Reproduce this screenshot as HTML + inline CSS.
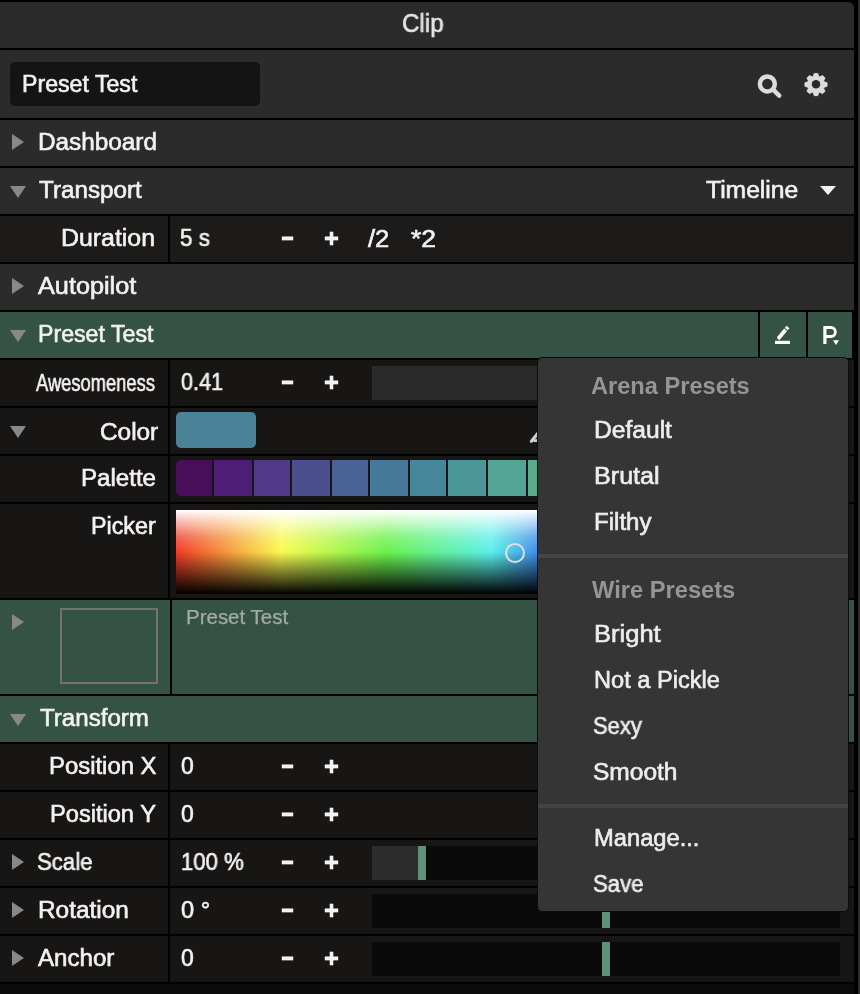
<!DOCTYPE html>
<html><head><meta charset="utf-8">
<style>
html,body{margin:0;padding:0;}
body{width:860px;height:994px;background:#000;position:relative;overflow:hidden;font-family:"Liberation Sans",sans-serif;color:#f2f2f2;}
.a{position:absolute;}
.t{position:absolute;font-size:24px;line-height:28px;white-space:nowrap;transform-origin:0 0;will-change:transform;}
.row{position:absolute;left:0;width:854px;height:46px;background:#2b2b2b;}
.dk{background:#1c1b1a;}
.dk2{background:#171615;}
.gr{background:#355345;}
.dv{position:absolute;top:0;width:2px;height:100%;background:#000;}
.tri-r{position:absolute;width:0;height:0;border-top:8px solid transparent;border-bottom:8px solid transparent;border-left:12px solid #888;}
.tri-d{position:absolute;width:0;height:0;border-left:8px solid transparent;border-right:8px solid transparent;border-top:12px solid #888;}
.sl{position:absolute;left:372px;width:468px;height:34px;top:6px;background:#0a0a0a;}
.hd{position:absolute;top:0;width:8px;height:34px;background:#5f9079;}
.menu{position:absolute;left:537px;top:357px;width:310px;height:553px;background:#353535;border:1px solid #0c0c0c;border-radius:5px;}
.sep{position:absolute;left:0;width:310px;height:4px;background:#444444;}
</style></head><body>
<div class="a" style="left:858px;top:0;width:2px;height:994px;background:#2c2c2c"></div>
<div class="a" style="left:0;top:984px;width:854px;height:10px;background:#0b0b0b"></div>

<div class="a" style="left:0;top:2px;width:854px;height:46px;background:#2b2b2b;border-top-right-radius:6px"></div>
<div class="a" style="left:0;top:50px;width:854px;height:68px;background:#2b2b2b"></div>
<div class="a" style="left:10px;top:62px;width:250px;height:44px;background:#141414;border-radius:5px"></div>
<svg class="a" style="left:750px;top:65px" width="40" height="40">
  <circle cx="17.35" cy="18.95" r="7.47" fill="none" stroke="#dcdcdc" stroke-width="4.45"/>
  <line x1="23.6" y1="25.2" x2="29.2" y2="30.7" stroke="#dcdcdc" stroke-width="4.5" stroke-linecap="round"/>
</svg>
<svg class="a" style="left:800px;top:68px" width="32" height="32">
  <path fill="#dcdcdc" stroke="#dcdcdc" stroke-width="0.8" stroke-linejoin="round" d="M13.30 8.35 L14.20 5.45 L17.80 5.45 L18.70 8.35 A8.20 8.20 0 0 1 19.89 8.84 L22.58 7.43 L25.12 9.97 L23.71 12.66 A8.20 8.20 0 0 1 24.20 13.85 L27.10 14.75 L27.10 18.35 L24.20 19.25 A8.20 8.20 0 0 1 23.71 20.44 L25.12 23.13 L22.58 25.67 L19.89 24.26 A8.20 8.20 0 0 1 18.70 24.75 L17.80 27.65 L14.20 27.65 L13.30 24.75 A8.20 8.20 0 0 1 12.11 24.26 L9.42 25.67 L6.88 23.13 L8.29 20.44 A8.20 8.20 0 0 1 7.80 19.25 L4.90 18.35 L4.90 14.75 L7.80 13.85 A8.20 8.20 0 0 1 8.29 12.66 L6.88 9.97 L9.42 7.43 L12.11 8.84 A8.20 8.20 0 0 1 13.30 8.35 Z"/>
  <circle cx="16" cy="16.3" r="4.25" fill="#2b2b2b"/>
</svg>

<div class="row" style="top:120px"></div>
<div class="tri-r" style="left:12px;top:134px"></div>

<div class="row" style="top:168px"></div>
<div class="tri-d" style="left:10px;top:186px"></div>
<div class="a" style="left:820px;top:186px;width:0;height:0;border-left:8px solid transparent;border-right:8px solid transparent;border-top:9px solid #f2f2f2"></div>

<div class="row dk" style="top:216px"><div class="dv" style="left:168px"></div></div>

<div class="row" style="top:264px"></div>
<div class="tri-r" style="left:12px;top:278px"></div>

<div class="row gr" style="top:312px;width:852px"><div class="dv" style="left:758px"></div><div class="dv" style="left:806px"></div></div>
<div class="tri-d" style="left:10px;top:330px"></div>
<svg class="a" style="left:760px;top:312px" width="92" height="46">
  <g fill="#fff" stroke="none">
    <rect x="15" y="28.8" width="14.9" height="3.2"/>
    <polygon points="17.39,24.52 17.18,26.31 19.30,28.14 27.11,19.02 24.22,16.55"/>
    <polygon points="24.80,15.86 27.69,18.33 29.45,16.28 26.56,13.81"/>
  </g>
  <g fill="#fff">
    <rect x="63.3" y="14.1" width="3.2" height="17.9"/>
  </g>
  <path d="M65 15.5 H70.9 A4.5 4.5 0 0 1 70.9 24.5 H65" fill="none" stroke="#fff" stroke-width="2.8"/>
  <polygon points="73,28.3 79,28.3 76,33" fill="#fff"/>
</svg>

<div class="row dk2" style="top:360px"><div class="dv" style="left:168px"></div><div class="sl" style="background:#2b2b2b"></div></div>

<div class="row dk2" style="top:408px"><div class="dv" style="left:168px"></div></div>
<div class="tri-d" style="left:10px;top:426px"></div>
<div class="a" style="left:176px;top:412px;width:80px;height:36px;background:#4a8398;border-radius:5px"></div>
<svg class="a" style="left:520px;top:425px" width="30" height="25"><path d="M11.4 16.3 L18.5 7.5" stroke="#cfcfcf" stroke-width="3.2" stroke-linecap="round"/><rect x="13.5" y="14.2" width="5" height="2.8" fill="#cfcfcf"/></svg>

<div class="row dk2" style="top:456px"><div class="dv" style="left:168px"></div></div>
<div class="a" style="left:176px;top:460px;width:664px;height:36px;border-radius:5px;overflow:hidden"><div class="a" style="left:0px;top:0;width:36px;height:36px;background:#480e5a"></div><div class="a" style="left:38px;top:0;width:38px;height:36px;background:#4e1e76"></div><div class="a" style="left:78px;top:0;width:36px;height:36px;background:#503a88"></div><div class="a" style="left:116px;top:0;width:38px;height:36px;background:#4c4f8e"></div><div class="a" style="left:156px;top:0;width:36px;height:36px;background:#4a6296"></div><div class="a" style="left:194px;top:0;width:38px;height:36px;background:#46789a"></div><div class="a" style="left:234px;top:0;width:36px;height:36px;background:#45869a"></div><div class="a" style="left:272px;top:0;width:38px;height:36px;background:#4a9698"></div><div class="a" style="left:312px;top:0;width:38px;height:36px;background:#52a494"></div><div class="a" style="left:352px;top:0;width:37px;height:36px;background:#58ac8c"></div><div class="a" style="left:391px;top:0;width:37px;height:36px;background:#66b686"></div><div class="a" style="left:430px;top:0;width:37px;height:36px;background:#7ec07c"></div><div class="a" style="left:469px;top:0;width:37px;height:36px;background:#98c870"></div><div class="a" style="left:508px;top:0;width:37px;height:36px;background:#b0d064"></div><div class="a" style="left:547px;top:0;width:37px;height:36px;background:#c8d858"></div><div class="a" style="left:586px;top:0;width:37px;height:36px;background:#dfe04c"></div><div class="a" style="left:625px;top:0;width:39px;height:36px;background:#f0e640"></div>
</div>

<div class="a dk2" style="left:0;top:504px;width:854px;height:94px"><div class="dv" style="left:168px"></div></div>
<div class="a" style="left:176px;top:510px;width:664px;height:84px;background:linear-gradient(to right,#f03a28 0px,#fafa50 105px,#6af24a 210px,#5af0ea 315px,#2f5ae6 385px,#e64bf0 510px,#f03a28 630px)"></div>
<div class="a" style="left:176px;top:510px;width:664px;height:84px;background:linear-gradient(to bottom,#fff 0%,rgba(255,255,255,.6) 16%,rgba(255,255,255,.22) 32%,rgba(255,255,255,0) 50%,rgba(0,0,0,0) 50%,#000 100%)"></div>
<div class="a" style="left:505px;top:543px;width:16px;height:16px;border:2px solid #e0e0e0;border-radius:50%"></div>

<div class="a gr" style="left:0;top:600px;width:854px;height:94px"><div class="dv" style="left:170px"></div></div>
<div class="tri-r" style="left:12px;top:614px"></div>
<div class="a" style="left:60px;top:608px;width:94px;height:72px;border:2px solid #727272"></div>

<div class="row gr" style="top:696px"></div>
<div class="tri-d" style="left:10px;top:714px"></div>

<div class="row dk2" style="top:744px"><div class="dv" style="left:168px"></div></div>
<div class="row dk2" style="top:792px"><div class="dv" style="left:168px"></div></div>
<div class="row dk2" style="top:840px"><div class="dv" style="left:168px"></div>
  <div class="sl"><div class="a" style="left:0;top:0;width:46px;height:34px;background:#2c2c2c"></div><div class="hd" style="left:46px"></div></div></div>
<div class="tri-r" style="left:12px;top:854px"></div>
<div class="row dk2" style="top:888px"><div class="dv" style="left:168px"></div>
  <div class="sl"><div class="hd" style="left:230px"></div></div></div>
<div class="tri-r" style="left:12px;top:902px"></div>
<div class="row dk2" style="top:936px"><div class="dv" style="left:168px"></div>
  <div class="sl"><div class="hd" style="left:230px"></div></div></div>
<div class="tri-r" style="left:12px;top:950px"></div>

<svg class="a" style="left:280px;top:230px" width="60" height="18"><g fill="#f2f2f2"><rect x="1.8" y="6.46" width="11.4" height="3.9"/><rect x="44.8" y="6.46" width="13.4" height="3.9"/><rect x="49.7" y="1.7" width="3.6" height="13.6"/></g></svg>
<svg class="a" style="left:280px;top:374px" width="60" height="18"><g fill="#f2f2f2"><rect x="1.8" y="6.46" width="11.4" height="3.9"/><rect x="44.8" y="6.46" width="13.4" height="3.9"/><rect x="49.7" y="1.7" width="3.6" height="13.6"/></g></svg>
<svg class="a" style="left:280px;top:758px" width="60" height="18"><g fill="#f2f2f2"><rect x="1.8" y="6.46" width="11.4" height="3.9"/><rect x="44.8" y="6.46" width="13.4" height="3.9"/><rect x="49.7" y="1.7" width="3.6" height="13.6"/></g></svg>
<svg class="a" style="left:280px;top:806px" width="60" height="18"><g fill="#f2f2f2"><rect x="1.8" y="6.46" width="11.4" height="3.9"/><rect x="44.8" y="6.46" width="13.4" height="3.9"/><rect x="49.7" y="1.7" width="3.6" height="13.6"/></g></svg>
<svg class="a" style="left:280px;top:854px" width="60" height="18"><g fill="#f2f2f2"><rect x="1.8" y="6.46" width="11.4" height="3.9"/><rect x="44.8" y="6.46" width="13.4" height="3.9"/><rect x="49.7" y="1.7" width="3.6" height="13.6"/></g></svg>
<svg class="a" style="left:280px;top:902px" width="60" height="18"><g fill="#f2f2f2"><rect x="1.8" y="6.46" width="11.4" height="3.9"/><rect x="44.8" y="6.46" width="13.4" height="3.9"/><rect x="49.7" y="1.7" width="3.6" height="13.6"/></g></svg>
<svg class="a" style="left:280px;top:950px" width="60" height="18"><g fill="#f2f2f2"><rect x="1.8" y="6.46" width="11.4" height="3.9"/><rect x="44.8" y="6.46" width="13.4" height="3.9"/><rect x="49.7" y="1.7" width="3.6" height="13.6"/></g></svg>


<div class="menu">
  <div class="sep" style="top:196px"></div>
  <div class="sep" style="top:446px"></div>
</div>
<div class="t" style="left:401.53px;top:9px;font-size:25px;color:#e4e4e4;font-weight:normal;transform:scaleX(0.9667);-webkit-text-stroke:0.6px #e4e4e4;">Clip</div>
<div class="t" style="left:22.49px;top:70px;font-size:23px;color:#f2f2f2;font-weight:normal;transform:scaleX(1.0061);-webkit-text-stroke:0.6px #f2f2f2;">Preset Test</div>
<div class="t" style="left:38.34px;top:128px;font-size:23px;color:#f2f2f2;font-weight:normal;transform:scaleX(1.0573);-webkit-text-stroke:0.6px #f2f2f2;">Dashboard</div>
<div class="t" style="left:38.60px;top:176px;font-size:23px;color:#f2f2f2;font-weight:normal;transform:scaleX(1.0541);-webkit-text-stroke:0.6px #f2f2f2;">Transport</div>
<div class="t" style="left:706.00px;top:176px;font-size:23px;color:#f2f2f2;font-weight:normal;transform:scaleX(1.0718);-webkit-text-stroke:0.6px #f2f2f2;">Timeline</div>
<div class="t" style="left:61.32px;top:224px;font-size:23px;color:#f2f2f2;font-weight:normal;transform:scaleX(1.0812);-webkit-text-stroke:0.6px #f2f2f2;">Duration</div>
<div class="t" style="left:179.92px;top:224px;font-size:23px;color:#f2f2f2;font-weight:normal;transform:scaleX(0.9759);-webkit-text-stroke:0.6px #f2f2f2;">5 s</div>
<div class="t" style="left:367.90px;top:225px;font-size:23px;color:#f2f2f2;font-weight:normal;transform:scaleX(1.1105);-webkit-text-stroke:0.6px #f2f2f2;">/2</div>
<div class="t" style="left:410.70px;top:225px;font-size:23px;color:#f2f2f2;font-weight:normal;transform:scaleX(1.1524);-webkit-text-stroke:0.6px #f2f2f2;">*2</div>
<div class="t" style="left:38.00px;top:272px;font-size:23px;color:#f2f2f2;font-weight:normal;transform:scaleX(1.0978);-webkit-text-stroke:0.6px #f2f2f2;">Autopilot</div>
<div class="t" style="left:38.49px;top:320px;font-size:23px;color:#f2f2f2;font-weight:normal;transform:scaleX(1.0070);-webkit-text-stroke:0.6px #f2f2f2;">Preset Test</div>
<div class="t" style="left:36.20px;top:369px;font-size:23px;color:#f2f2f2;font-weight:normal;transform:scaleX(0.7973);-webkit-text-stroke:0.6px #f2f2f2;">Awesomeness</div>
<div class="t" style="left:180.50px;top:368px;font-size:23px;color:#f2f2f2;font-weight:normal;transform:scaleX(0.9409);-webkit-text-stroke:0.6px #f2f2f2;">0.41</div>
<div class="t" style="left:99.84px;top:418px;font-size:23px;color:#f2f2f2;font-weight:normal;transform:scaleX(1.0593);-webkit-text-stroke:0.6px #f2f2f2;">Color</div>
<div class="t" style="left:80.95px;top:464px;font-size:23px;color:#f2f2f2;font-weight:normal;transform:scaleX(1.0471);-webkit-text-stroke:0.6px #f2f2f2;">Palette</div>
<div class="t" style="left:90.59px;top:512px;font-size:23px;color:#f2f2f2;font-weight:normal;transform:scaleX(1.0127);-webkit-text-stroke:0.6px #f2f2f2;">Picker</div>
<div class="t" style="left:186.28px;top:603px;font-size:20px;color:#a4aba7;font-weight:normal;transform:scaleX(1.0242);-webkit-text-stroke:0.25px #a4aba7;">Preset Test</div>
<div class="t" style="left:40.10px;top:704px;font-size:23px;color:#f2f2f2;font-weight:normal;transform:scaleX(1.0476);-webkit-text-stroke:0.6px #f2f2f2;">Transform</div>
<div class="t" style="left:49.26px;top:752px;font-size:23px;color:#f2f2f2;font-weight:normal;transform:scaleX(1.0382);-webkit-text-stroke:0.6px #f2f2f2;">Position X</div>
<div class="t" style="left:49.67px;top:800px;font-size:23px;color:#f2f2f2;font-weight:normal;transform:scaleX(1.0265);-webkit-text-stroke:0.6px #f2f2f2;">Position Y</div>
<div class="t" style="left:180.50px;top:752px;font-size:23px;color:#f2f2f2;font-weight:normal;-webkit-text-stroke:0.6px #f2f2f2;">0</div>
<div class="t" style="left:180.50px;top:800px;font-size:23px;color:#f2f2f2;font-weight:normal;-webkit-text-stroke:0.6px #f2f2f2;">0</div>
<div class="t" style="left:37.24px;top:848px;font-size:23px;color:#f2f2f2;font-weight:normal;transform:scaleX(0.9643);-webkit-text-stroke:0.6px #f2f2f2;">Scale</div>
<div class="t" style="left:180.74px;top:848px;font-size:23px;color:#f2f2f2;font-weight:normal;transform:scaleX(0.9625);-webkit-text-stroke:0.6px #f2f2f2;">100 %</div>
<div class="t" style="left:38.14px;top:896px;font-size:23px;color:#f2f2f2;font-weight:normal;transform:scaleX(1.0607);-webkit-text-stroke:0.6px #f2f2f2;">Rotation</div>
<div class="t" style="left:180.50px;top:896px;font-size:23px;color:#f2f2f2;font-weight:normal;transform:scaleX(1.0259);-webkit-text-stroke:0.6px #f2f2f2;">0 °</div>
<div class="t" style="left:38.00px;top:944px;font-size:23px;color:#f2f2f2;font-weight:normal;transform:scaleX(1.0479);-webkit-text-stroke:0.6px #f2f2f2;">Anchor</div>
<div class="t" style="left:180.50px;top:944px;font-size:23px;color:#f2f2f2;font-weight:normal;-webkit-text-stroke:0.6px #f2f2f2;">0</div>
<div class="t" style="left:591.07px;top:372px;font-size:23px;color:#959595;font-weight:bold;transform:scaleX(1.0261);">Arena Presets</div>
<div class="t" style="left:594.03px;top:416px;font-size:23px;color:#ededed;font-weight:normal;transform:scaleX(1.0694);-webkit-text-stroke:0.6px #ededed;">Default</div>
<div class="t" style="left:594.01px;top:462px;font-size:23px;color:#ededed;font-weight:normal;transform:scaleX(1.0931);-webkit-text-stroke:0.6px #ededed;">Brutal</div>
<div class="t" style="left:594.05px;top:508px;font-size:23px;color:#ededed;font-weight:normal;transform:scaleX(1.0463);-webkit-text-stroke:0.6px #ededed;">Filthy</div>
<div class="t" style="left:592.10px;top:576px;font-size:23px;color:#959595;font-weight:bold;transform:scaleX(1.0297);">Wire Presets</div>
<div class="t" style="left:593.99px;top:620px;font-size:23px;color:#ededed;font-weight:normal;transform:scaleX(1.1102);-webkit-text-stroke:0.6px #ededed;">Bright</div>
<div class="t" style="left:594.07px;top:666px;font-size:23px;color:#ededed;font-weight:normal;transform:scaleX(1.0256);-webkit-text-stroke:0.6px #ededed;">Not a Pickle</div>
<div class="t" style="left:593.25px;top:712px;font-size:23px;color:#ededed;font-weight:normal;transform:scaleX(0.9529);-webkit-text-stroke:0.6px #ededed;">Sexy</div>
<div class="t" style="left:593.13px;top:758px;font-size:23px;color:#ededed;font-weight:normal;transform:scaleX(1.0662);-webkit-text-stroke:0.6px #ededed;">Smooth</div>
<div class="t" style="left:594.07px;top:824px;font-size:23px;color:#ededed;font-weight:normal;transform:scaleX(1.0310);-webkit-text-stroke:0.6px #ededed;">Manage...</div>
<div class="t" style="left:593.24px;top:870px;font-size:23px;color:#ededed;font-weight:normal;transform:scaleX(0.9608);-webkit-text-stroke:0.6px #ededed;">Save</div>
</body></html>
